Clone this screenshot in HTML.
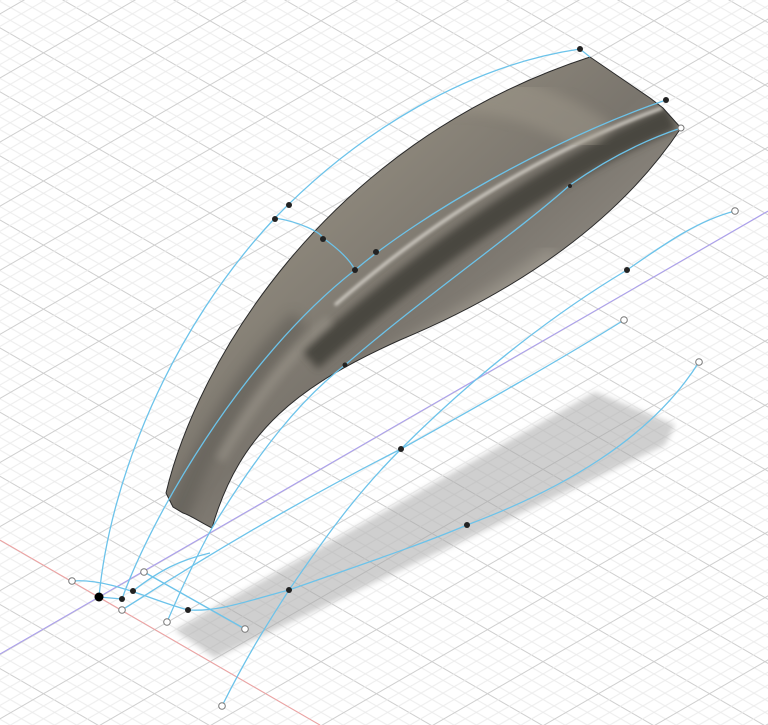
<!DOCTYPE html>
<html><head><meta charset="utf-8"><style>html,body{margin:0;padding:0;background:#fff}svg{display:block}</style></head>
<body>
<svg width="768" height="725" viewBox="0 0 768 725" xmlns="http://www.w3.org/2000/svg">
<defs>
<pattern id="g1" width="1000" height="55.5" patternUnits="userSpaceOnUse" patternTransform="translate(99,597) rotate(30)">
<line x1="0" y1="11.1" x2="1000" y2="11.1" stroke="#ececec" stroke-width="1"/>
<line x1="0" y1="22.2" x2="1000" y2="22.2" stroke="#ececec" stroke-width="1"/>
<line x1="0" y1="33.3" x2="1000" y2="33.3" stroke="#ececec" stroke-width="1"/>
<line x1="0" y1="44.4" x2="1000" y2="44.4" stroke="#ececec" stroke-width="1"/>
<line x1="0" y1="0.5" x2="1000" y2="0.5" stroke="#cfcfcf" stroke-width="1"/>
</pattern>
<pattern id="g2" width="1000" height="55.5" patternUnits="userSpaceOnUse" patternTransform="translate(99,597) rotate(-30)">
<line x1="0" y1="11.1" x2="1000" y2="11.1" stroke="#ececec" stroke-width="1"/>
<line x1="0" y1="22.2" x2="1000" y2="22.2" stroke="#ececec" stroke-width="1"/>
<line x1="0" y1="33.3" x2="1000" y2="33.3" stroke="#ececec" stroke-width="1"/>
<line x1="0" y1="44.4" x2="1000" y2="44.4" stroke="#ececec" stroke-width="1"/>
<line x1="0" y1="0.5" x2="1000" y2="0.5" stroke="#cfcfcf" stroke-width="1"/>
</pattern>
<filter id="blur4"><feGaussianBlur stdDeviation="4"/></filter>
<filter id="blur6"><feGaussianBlur stdDeviation="6"/></filter>
<filter id="blur3"><feGaussianBlur stdDeviation="3"/></filter>
<filter id="blur2"><feGaussianBlur stdDeviation="1.5"/></filter>
<linearGradient id="metal" x1="0" y1="0" x2="1" y2="1">
<stop offset="0" stop-color="#6a665e"/>
<stop offset="0.3" stop-color="#8e887c"/>
<stop offset="0.5" stop-color="#7a756d"/>
<stop offset="0.7" stop-color="#928d85"/>
<stop offset="1" stop-color="#6c6962"/>
</linearGradient>
<clipPath id="surf"><path id="sp" d="M166,493 C195,370 320,145 590,57 L650,98 L663,108 L681,128 C620,220 520,290 400,340 C300,385 240,430 212,528 C200,522 190,515 183,513 L173,507 Z"/></clipPath>
</defs>
<rect width="768" height="725" fill="#fff"/>
<rect width="768" height="725" fill="url(#g1)"/>
<rect width="768" height="725" fill="url(#g2)"/>
<!-- shadow -->
<path d="M175,630 L595,392 L675,425 L665,445 L215,658 Z" fill="#a8a8a8" opacity="0.55" filter="url(#blur3)"/>
<!-- axes -->
<line x1="0" y1="540" x2="320" y2="725" stroke="#f0a0a0" stroke-width="1"/>
<line x1="0" y1="654" x2="768" y2="211" stroke="#a99cf0" stroke-width="1"/>
<!-- surface -->
<use href="#sp" fill="url(#metal)"/>
<g clip-path="url(#surf)">
<path d="M175,520 C210,430 250,370 300,320" stroke="#5f5b55" stroke-width="22" fill="none" opacity="0.6" filter="url(#blur6)"/>
<path d="M310,360 C390,290 510,190 672,118" stroke="#4a4741" stroke-width="24" fill="none" filter="url(#blur4)"/>
<path d="M335,305 C410,240 520,160 662,108" stroke="#d8d4cc" stroke-width="3" fill="none" filter="url(#blur2)"/>
<path d="M430,95 C480,85 540,100 600,140" stroke="#a39c8e" stroke-width="40" fill="none" opacity="0.45" filter="url(#blur6)"/>
<path d="M360,385 C430,345 490,310 560,260" stroke="#aaa59a" stroke-width="34" fill="none" opacity="0.5" filter="url(#blur6)"/>
<path d="M220,460 C260,390 300,345 330,320" stroke="#b0aba0" stroke-width="10" fill="none" opacity="0.35" filter="url(#blur4)"/>
</g>
<use href="#sp" fill="none" stroke="#2a2a2a" stroke-width="1"/>
<!-- curves -->
<g stroke="#6cc3ea" stroke-width="1.3" fill="none">
<path d="M99,597 C110,480 170,330 275,218 C360,130 470,65 580,49 L590,57"/>
<path d="M275,218 C300,222 320,232 323,238 C340,250 350,260 355,270"/>
<path d="M99,597 L122,599 M122,599 C150,520 240,360 355,270 C420,215 550,140 666,100"/>
<path d="M167,622 C185,580 200,550 212,528 C260,450 300,400 345,365 C420,300 520,230 570,185 C620,150 660,135 681,128"/>
<path d="M72,581 C110,578 150,600 188,610 C220,612 250,600 289,590 C360,565 420,545 467,525 C560,490 650,440 699,362"/>
<path d="M144,572 L245,629"/>
<path d="M122,610 C200,560 300,500 401,449 C480,405 560,360 624,320"/>
<path d="M222,706 C250,650 270,620 289,590 C330,530 360,490 401,449 C480,370 560,310 627,270 C670,240 700,220 735,211"/>
<path d="M133,591 C160,570 180,560 210,553"/>
</g>
<!-- points -->
<g fill="#222">
<circle cx="99" cy="597" r="4.5" fill="#000"/>
<circle cx="133" cy="591" r="3"/><circle cx="122" cy="599" r="3"/>
<circle cx="188" cy="610" r="3"/><circle cx="289" cy="590" r="3"/>
<circle cx="467" cy="525" r="3"/><circle cx="401" cy="449" r="3"/>
<circle cx="627" cy="270" r="3"/><circle cx="345" cy="365" r="2.5"/>
<circle cx="580" cy="49" r="3"/><circle cx="666" cy="100" r="3"/>
<circle cx="289" cy="205" r="3"/><circle cx="275" cy="219" r="3"/>
<circle cx="323" cy="239" r="3"/><circle cx="376" cy="252" r="3"/>
<circle cx="355" cy="270" r="3"/><circle cx="570" cy="186" r="2"/>
</g>
<g fill="#fff" stroke="#777" stroke-width="1">
<circle cx="72" cy="581" r="3.3"/><circle cx="144" cy="572" r="3.3"/>
<circle cx="122" cy="610" r="3.3"/><circle cx="167" cy="622" r="3.3"/>
<circle cx="245" cy="629" r="3.3"/><circle cx="222" cy="706" r="3.3"/>
<circle cx="624" cy="320" r="3.3"/><circle cx="735" cy="211" r="3.3"/>
<circle cx="699" cy="362" r="3.3"/><circle cx="681" cy="128" r="3"/>
</g>
</svg>
</body></html>
